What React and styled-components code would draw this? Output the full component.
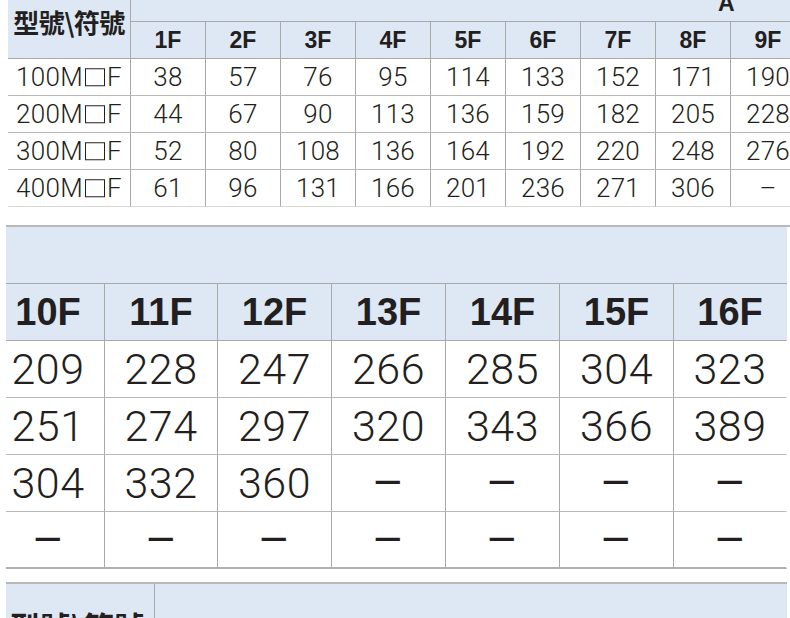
import React from "react";
import styled, { createGlobalStyle } from "styled-components";

const Global = createGlobalStyle`
  html, body { margin: 0; padding: 0; background: #fff; }
  body { width: 790px; height: 618px; overflow: hidden; }
  #root { width: 790px; height: 618px; overflow: hidden; }
`;

const BLUE = "#dee8f5";
const LINE = "#a9a9a9";
const INK = "#231f20";

const Page = styled.div`
  display: flex;
  flex-direction: column;
  width: 790px;
  height: 618px;
  overflow: hidden;
  color: ${INK};
`;

const Grid = styled.div`
  display: grid;
  grid-template-columns: ${(p) => p.$cols};
  grid-auto-rows: ${(p) => p.$row}px;
  margin: ${(p) => p.$margin};
  flex-shrink: 0;
  ${(p) => p.$top && `border-top: 2px solid #b8b8b8;`}
`;

const Corner = styled.div`
  grid-row: span 2;
  background: ${BLUE};
  border-right: 1px solid ${LINE};
  border-bottom: 1px solid ${LINE};
  display: flex;
  align-items: center;
  justify-content: center;
  font-family: "Noto Sans CJK TC", "Noto Sans CJK SC", sans-serif;
  font-weight: 700;
  font-size: 26px;
  letter-spacing: -0.5px;
`;

const Band = styled.div`
  grid-column: span ${(p) => p.$span};
  background: ${BLUE};
  border-bottom: 1px solid ${LINE};
  display: flex;
  align-items: center;
  padding-left: ${(p) => p.$pad || 0}px;
  font-family: "Liberation Sans", Arial, sans-serif;
  font-weight: 700;
  font-size: 23px;
`;

const Head = styled.div`
  background: ${BLUE};
  border-right: 1px solid ${(p) => (p.$last ? "transparent" : LINE)};
  border-bottom: 1px solid ${LINE};
  display: flex;
  align-items: center;
  justify-content: center;
  padding-right: ${(p) => p.$shift || 0}px;
  font-family: "Liberation Sans", Arial, sans-serif;
  font-weight: 700;
  font-size: ${(p) => p.$size}px;
`;

const Cell = styled.div`
  background: #fff;
  border-right: 1px solid ${(p) => (p.$last ? "transparent" : LINE)};
  border-bottom: ${(p) => (p.$bottom ? "2px solid #b0b0b0" : `1px solid ${p.$faint ? "#d8d8d8" : "#b8b8b8"}`)};
  display: flex;
  align-items: center;
  justify-content: center;
  padding-right: ${(p) => p.$shift || 0}px;
  font-family: Roboto, "Liberation Sans", sans-serif;
  font-weight: 300;
  font-size: ${(p) => p.$size}px;
  letter-spacing: ${(p) => (p.$size > 30 ? "0.5px" : "0.3px")};
  white-space: nowrap;
  overflow: hidden;
`;

const Dash = styled.span`
  display: inline-block;
  font-weight: 400;
  transform: scaleX(1.15);
`;

const Box = styled.span`
  display: inline-block;
  width: 0.8em;
  height: 0.73em;
  border: 1px solid ${INK};
  box-sizing: border-box;
  margin: 0 0.06em 0 0.06em;
  transform: translateY(0.01em);
`;

const Third = styled.div`
  display: flex;
  margin: 13px 3px 0 6px;
  border-top: 2px solid #b8b8b8;
  background: ${BLUE};
  height: 60px;
  flex-shrink: 0;
`;

const ThirdCorner = styled.div`
  width: 145px;
  border-right: 1px solid ${LINE};
  padding: 26px 0 0 3px;
  font-family: "Noto Sans CJK TC", "Noto Sans CJK SC", sans-serif;
  font-weight: 700;
  font-size: 31px;
  line-height: 1;
  white-space: nowrap;
  overflow: hidden;
`;

const topHeads = ["1F", "2F", "3F", "4F", "5F", "6F", "7F", "8F", "9F"];
const topRows = [
  ["100", ["38", "57", "76", "95", "114", "133", "152", "171", "190"]],
  ["200", ["44", "67", "90", "113", "136", "159", "182", "205", "228"]],
  ["300", ["52", "80", "108", "136", "164", "192", "220", "248", "276"]],
  ["400", ["61", "96", "131", "166", "201", "236", "271", "306", "–"]],
];

const botHeads = ["10F", "11F", "12F", "13F", "14F", "15F", "16F"];
const botRows = [
  ["209", "228", "247", "266", "285", "304", "323"],
  ["251", "274", "297", "320", "343", "366", "389"],
  ["304", "332", "360", "–", "–", "–", "–"],
  ["–", "–", "–", "–", "–", "–", "–"],
];

const show = (v) => (v === "–" ? <Dash>–</Dash> : v);

export default function App() {
  return (
    <Page>
      <Global />
      <Grid $cols="123px repeat(9, 75px)" $row={37} $margin="-15px 0 0 8px">
        <Corner>型號\符號</Corner>
        <Band $span={9} $pad={587}>A</Band>
        {topHeads.map((h) => (
          <Head key={h} $size={23}>{h}</Head>
        ))}
        {topRows.map(([m, vals], r) => (
          <React.Fragment key={m}>
            <Cell $size={26} $faint={r === 3}>
              {m}M<Box />F
            </Cell>
            {vals.map((v, i) => (
              <Cell key={i} $size={26} $faint={r === 3}>
                {v}
              </Cell>
            ))}
          </React.Fragment>
        ))}
      </Grid>

      <Grid
        $cols="99px 113px 114px 114px 114px 114px 113px"
        $row={57}
        $margin="18px 0 0 6px"
        $top
      >
        <Band $span={7} />
        {botHeads.map((h, i) => (
          <Head key={h} $size={38} $shift={i === 0 ? 14 : 0} $last={i === 6}>
            {h}
          </Head>
        ))}
        {botRows.map((row, r) =>
          row.map((v, i) => (
            <Cell
              key={`${r}-${i}`}
              $size={43}
              $shift={i === 0 ? 14 : 0}
              $last={i === 6}
              $bottom={r === 3}
            >
              {show(v)}
            </Cell>
          ))
        )}
      </Grid>

      <Third>
        <ThirdCorner>型號\符號</ThirdCorner>
      </Third>
    </Page>
  );
}
